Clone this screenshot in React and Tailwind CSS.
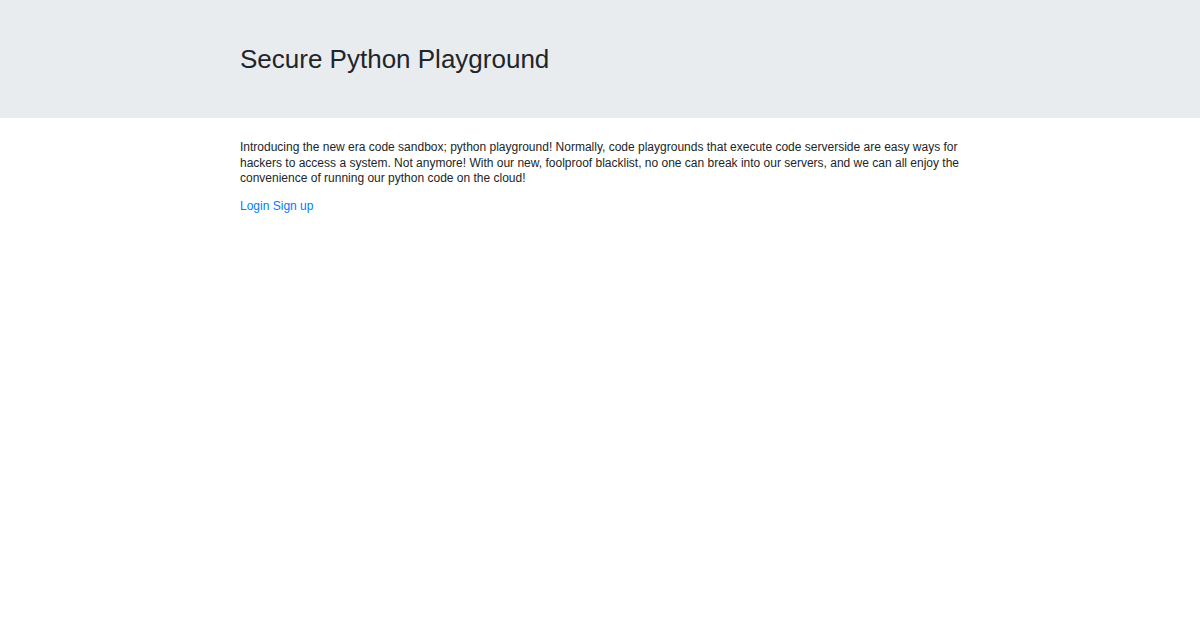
export default function App() {
  return (
    <div className="min-h-[623px] bg-white font-[family-name:Liberation_Sans,Arial,sans-serif] text-[#212529]">
      <div className="bg-[#e9ecef] h-[118px] flex items-center">
        <div className="w-[720px] mx-auto">
          <h1 className="text-[26px] leading-[32px] text-[#212529]">Secure Python Playground</h1>
        </div>
      </div>
      <div className="w-[720px] mx-auto pt-[22px]">
        <p className="text-[12px] leading-[15.5px] mb-[12px]">
          Introducing the new era code sandbox; python playground! Normally, code playgrounds that execute code serverside are easy ways for hackers to access a system. Not anymore! With our new, foolproof blacklist, no one can break into our servers, and we can all enjoy the convenience of running our python code on the cloud!
        </p>
        <p className="text-[12px] leading-[15.5px]">
          <a href="#" className="text-[#007bff]">Login</a>{' '}
          <a href="#" className="text-[#007bff]">Sign up</a>
        </p>
      </div>
    </div>
  )
}
